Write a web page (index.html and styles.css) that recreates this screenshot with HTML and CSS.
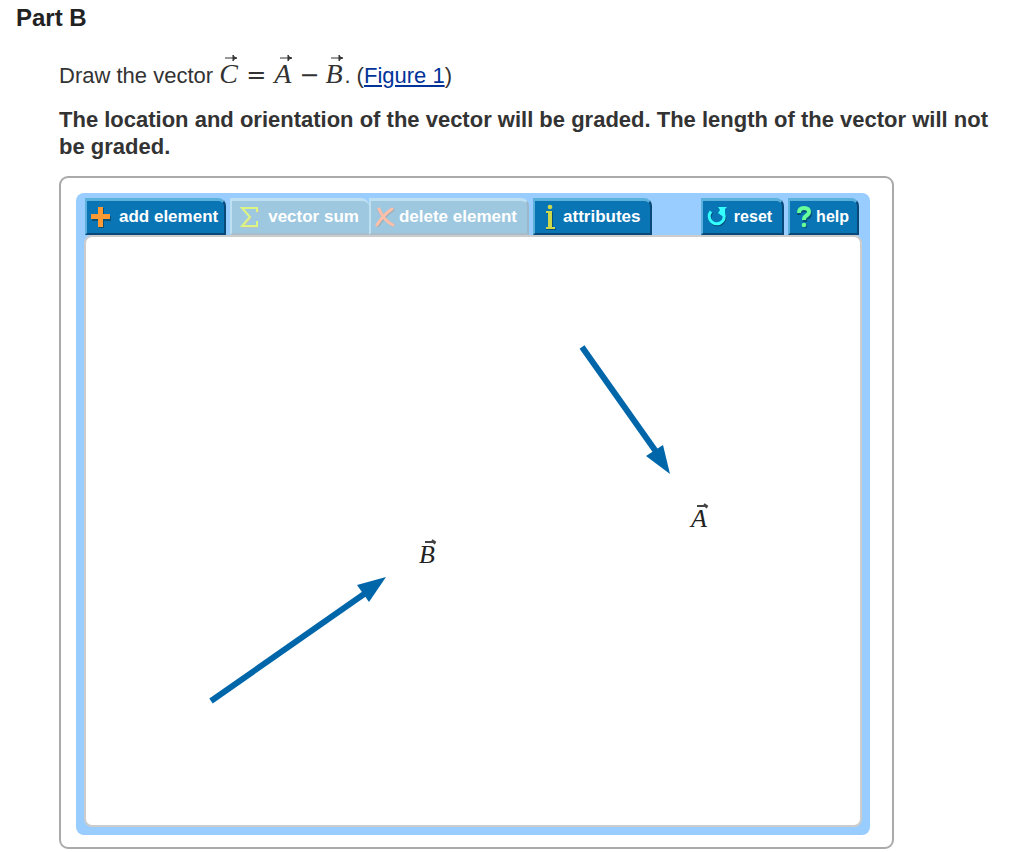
FILE: index.html
```html
<!DOCTYPE html>
<html lang="en">
<head>
<meta charset="utf-8">
<title>Part B</title>
<link rel="stylesheet" href="styles.css">
</head>
<body>
<main class="part">
  <h1 class="part-title">Part B</h1>
  <section class="part-body">
    <p class="prompt">Draw the vector <span class="math"><span class="vec">C<svg class="vec-arrow" viewBox="0 0 12 6" aria-hidden="true"><path d="M0 3H11"/><path class="vec-tip" d="M8 0Q9 3 12 3Q9 3 8 6z"/></svg></span><span class="op">=</span><span class="vec">A<svg class="vec-arrow" viewBox="0 0 12 6" aria-hidden="true"><path d="M0 3H11"/><path class="vec-tip" d="M8 0Q9 3 12 3Q9 3 8 6z"/></svg></span><span class="op op-minus">−</span><span class="vec">B<svg class="vec-arrow" viewBox="0 0 12 6" aria-hidden="true"><path d="M0 3H11"/><path class="vec-tip" d="M8 0Q9 3 12 3Q9 3 8 6z"/></svg></span></span>. (<a class="figure-link" href="#figure-1">Figure 1</a>)</p>
    <p class="note">The location and orientation of the vector will be graded. The length of the vector will not be graded.</p>
    <div class="frame">
      <div class="applet">
        <div class="toolbar">
          <button class="tool tool-add" type="button">
            <svg width="21" height="22" viewBox="0 0 21 22" aria-hidden="true"><path fill="#075078" d="M9 2h5v8h8v5h-8v7H9v-7H2v-5h7z"/><path fill="#f93" d="M8 1h5v7h7v5h-7v8H8v-8H1V8h7z"/></svg>
            add element</button>
          <button class="tool tool-sum" type="button" disabled>
            <svg width="20" height="22" viewBox="0 0 20 22" aria-hidden="true"><path fill="none" stroke="#dfb9a8" stroke-width="1" d="M18 7V3M11 12l-7 8M2 22h16"/><path fill="none" stroke="#dcf582" stroke-width="2" d="M17 6V2H2l8 9-8 9h15v-5"/></svg>
            vector sum</button>
          <button class="tool tool-delete" type="button" disabled>
            <svg width="20" height="20" viewBox="0 0 20 20" aria-hidden="true"><g fill="none" stroke-linecap="round"><path stroke="#9ab0ba" stroke-width="3" d="M4 3q7 12 14 15M18 3Q10 8 3 19"/><path stroke="#ffbfa8" stroke-width="3" d="M4 2q5 12 14 16M17 2Q8 8 2 18"/></g></svg>
            delete element</button>
          <button class="tool tool-attributes" type="button">
            <svg width="13" height="26" viewBox="0 0 13 26" aria-hidden="true"><path fill="#075078" d="M3 8h6v16h3v2H2v-2h3V10H3z"/><g fill="#cbd94b"><circle cx="6" cy="3" r="2.300"/><path d="M2 7h6v16h3v2H2v-2h2V9H2z"/></g></svg>
            attributes</button>
          <button class="tool tool-reset" type="button">
            <svg width="22" height="22" viewBox="0 0 22 22" aria-hidden="true"><g transform="translate(1 1)" fill="none" stroke="#075078" stroke-width="3"><path d="M4 5.500a7.500 7.500 0 1 0 11 0"/></g><path fill="none" stroke="#3ff" stroke-width="3" d="M4 5.500a7.500 7.500 0 1 0 11-.5"/><path fill="#3ff" d="M11 1h9l-2 2v9l-7-5 2-3z"/></svg>
            reset</button>
          <button class="tool tool-help" type="button">
            <svg width="16" height="24" viewBox="0 0 16 24" aria-hidden="true"><g fill="none" stroke="#075078" stroke-width="4"><path d="M3 10q0-5 6-5 5 0 5 4 0 3-4 4-1 1-1 4"/></g><circle cx="9" cy="21" r="2.300" fill="#075078"/><path fill="none" stroke="#6f9" stroke-width="4" d="M3 8q0-5 5-5 5 0 5 4 0 2-3 4-2 1-2 4"/><circle cx="8" cy="20" r="2.300" fill="#6f9"/></svg>
            help</button>
        </div>
        <div class="canvas">
          <svg class="drawing" viewBox="0 0 774 588" role="img" aria-label="Vectors A and B">
            <g class="vector">
              <path class="shaft" d="M496 110 571 216"/>
              <path class="head" d="M584 237 577 208 560 219z"/>
              <path class="shaft" d="M125 464 281 355"/>
              <path class="head" d="M300 340 271 348 283 365z"/>
            </g>
            <g class="vector-label">
              <text x="605" y="290">A</text>
              <path d="M611 269h10M618 267l3 2-1 2"/>
              <text x="333" y="326">B</text>
              <path d="M339 305h10M346 303l3 2-1 2"/>
            </g>
          </svg>
        </div>
      </div>
    </div>
  </section>
</main>
</body>
</html>
```

FILE: styles.css
```css
* {
  box-sizing: border-box;
}

body {
  margin: 0;
  background: #fff;
  color: #333;
  font-family: "Liberation Sans", Arial, sans-serif;
  font-size: 22px;
  line-height: 27px;
}

.part {
  padding: 4px 16px 3px;
}

.part-title {
  margin: 0;
  color: #222;
  font-size: 24px;
  line-height: 28px;
}

.part-body {
  padding-left: 43px;
}

.prompt {
  margin: 28px 0 0;
  line-height: 28px;
}

.math {
  font-family: "Liberation Serif", "Times New Roman", serif;
  font-size: 28px;
  line-height: 28px;
}

.vec {
  display: inline-block;
  position: relative;
  min-width: 19px;
  font-style: italic;
}

.vec-arrow {
  position: absolute;
  top: -5px;
  left: 6px;
  width: 12px;
  height: 6px;
  fill: none;
  stroke: #333;
  stroke-width: 1;
}

.vec-tip {
  fill: #333;
}

.op {
  margin: 0 8px;
  font-family: "DejaVu Serif", serif;
  font-size: 24px;
  line-height: 24px;
}

.op-minus {
  margin: 0 6px;
}

.figure-link {
  color: #039;
}

.note {
  margin: 16px 0;
  font-weight: bold;
}

.frame {
  max-width: 835px;
  padding: 15px 22px 12px 15px;
  border: 2px solid #aaa;
  border-radius: 9px;
}

.applet {
  padding: 5px 8px 8px;
  border-radius: 8px;
  background: #9cf;
}

.toolbar {
  display: flex;
  padding: 0 3px 0 1px;
}

.tool {
  display: flex;
  align-items: center;
  height: 37px;
  padding: 0;
  border: 3px solid;
  border-color: #5cb0dc #0a4878 #0a4878 #5cb0dc;
  border-width: 3px 2px 2px 2px;
  border-radius: 0 8px 0 0;
  background: #0a75b5;
  color: #fff;
  font: bold 17px/20px "Liberation Sans", Arial, sans-serif;
  white-space: nowrap;
}

.tool:disabled {
  border-color: #bfe0f0 #9bb8cb #a8bccb #bfe0f0;
  background: #9ec8e0;
  color: #fff;
}

.tool-add {
  gap: 8px;
  margin-right: 4px;
  padding: 0 6px 0 3px;
}

.tool-sum {
  gap: 8px;
  padding: 0 10px 0 8px;
  border-right-width: 0;
}

.tool-delete {
  gap: 4px;
  margin-right: 4px;
  padding: 0 10px 0 4px;
}

.tool-attributes {
  gap: 6px;
  padding: 0 10px 0 9px;
}

.tool-reset {
  gap: 5px;
  margin-left: auto;
  margin-right: 4px;
  padding: 0 10px 0 4px;
  font-size: 16px;
}

.tool-help {
  gap: 4px;
  padding: 0 8px 0 6px;
  font-size: 16px;
}

.canvas {
  border: 2px solid #ccc;
  border-radius: 8px;
  background: #fff;
}

.drawing {
  display: block;
  width: 100%;
}

.shaft {
  fill: none;
  stroke: #06a;
  stroke-width: 6;
}

.head {
  fill: #06a;
}

.vector-label {
  fill: #222;
  font: italic 26px "Liberation Serif", "Times New Roman", serif;
}

.vector-label path {
  fill: none;
  stroke: #444;
  stroke-width: 2;
}
```
